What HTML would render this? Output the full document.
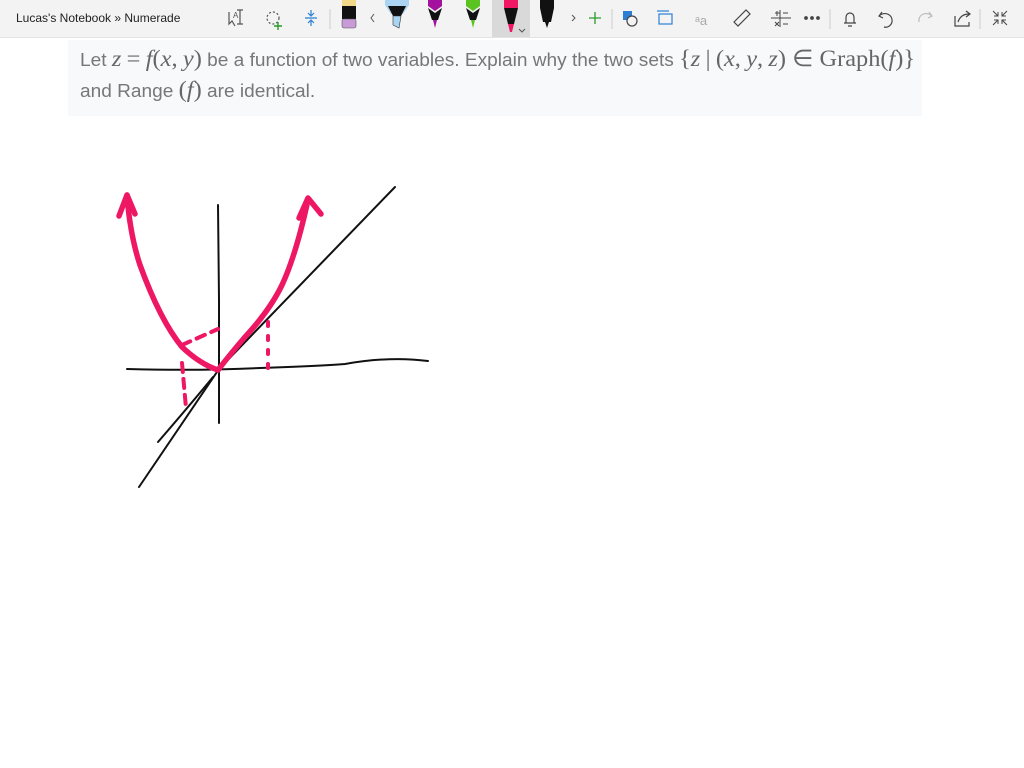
<!DOCTYPE html>
<html><head><meta charset="utf-8"><style>
html,body{margin:0;padding:0;width:1024px;height:768px;background:#fff;overflow:hidden;font-family:"Liberation Sans",sans-serif}
.tb{position:absolute;left:0;top:0;width:1024px;height:37px;background:#f3f3f3;border-bottom:1px solid #e3e3e3}
.title{position:absolute;left:16px;top:11px;font-size:12px;color:#222}
.box{position:absolute;left:68px;top:40px;width:854px;height:76px;background:#f8f9fa}
.q{position:absolute;left:80px;top:44px;font-size:18px;line-height:29px;color:#777;white-space:nowrap;transform-origin:0 0;transform:scaleX(1.06)}
.m{font-family:"Liberation Serif",serif;font-style:italic;font-size:23px;color:#666}
.r{font-family:"Liberation Serif",serif;font-size:23px;color:#666}
</style></head><body>
<div class="tb"></div>
<div class="title">Lucas's Notebook » Numerade</div>
<svg style="position:absolute;left:0;top:0" width="1024" height="38">
<rect x="492" y="0" width="38" height="37" fill="#d9d9d9"/>
<g stroke="#555" fill="none" stroke-width="1.2">
<path d="M229 12 L229 24 L232 21 L235 26"/><text x="233" y="18" font-size="8" fill="#555" stroke="none">A</text><path d="M240 10v14M237 10h6M237 24h6"/>
<circle cx="273" cy="18" r="6" stroke-dasharray="2 2"/>
<path d="M305 18h12M311 10v5M308 13l3 3 3-3M311 26v-5M308 23l3-3 3 3" stroke="#2a7fd4"/>
</g>
<path d="M278 22v8M274 26h8" stroke="#2a9a2a" stroke-width="1.4"/>
<line x1="330" y1="9" x2="330" y2="29" stroke="#ccc"/>
<rect x="342" y="0" width="14" height="6" fill="#f4d88a"/><rect x="342" y="6" width="14" height="13" fill="#111"/><rect x="342" y="19" width="14" height="9" rx="2" fill="#c89ad6" stroke="#555" stroke-width=".6"/>
<path d="M374 14l-3 4 3 4" stroke="#555" fill="none"/>
<path d="M385 0h24v5l-6 9h-12l-6-9z" fill="#a9d4f2"/><path d="M388 6h18l-5 10h-8z" fill="#111"/><path d="M393 16h8l-2 12-6-3z" fill="#a9d4f2" stroke="#333" stroke-width=".6"/>
<path d="M428 0h14v6l-7 5-7-5z" fill="#a3119e"/><path d="M428 8l7 5 7-5l-4 12h-6z" fill="#111"/><path d="M433 20h4l-2 8z" fill="#a3119e"/>
<path d="M466 0h14v6l-7 5-7-5z" fill="#5bc31f"/><path d="M466 8l7 5 7-5l-4 12h-6z" fill="#111"/><path d="M471 20h4l-2 8z" fill="#5bc31f"/>
<path d="M504 0h14v8h-14z" fill="#f01764"/><path d="M504 8h14l-4 16h-6z" fill="#111"/><path d="M508 24h6l-2 8h-2z" fill="#f01764"/>
<path d="M519 29l3 3 3-3" stroke="#555" fill="none"/>
<path d="M540 0h14v8l-3 14h-8l-3-14z" fill="#111"/><path d="M545 22h4l-2 6z" fill="#111"/>
<path d="M572 15l3 3-3 3" stroke="#555" fill="none"/>
<path d="M595 12v12M589 18h12" stroke="#2a9a2a" stroke-width="1.3"/>
<line x1="612" y1="9" x2="612" y2="29" stroke="#ccc"/>
<g fill="none" stroke="#444" stroke-width="1.2">
<rect x="623" y="11" width="9" height="9" fill="#2a7fd4" stroke="none"/><circle cx="632" cy="21" r="5" fill="#f3f3f3"/>
<rect x="659" y="14" width="13" height="10" stroke="#2a7fd4"/><path d="M657 11h12" stroke="#2a7fd4"/>
<text x="695" y="25" font-size="13" fill="#aaa" stroke="none">ᵃa</text>
<path d="M734 22l12-12 4 4-12 12z"/>
<path d="M775 13h5M777 11v5M783 13h5M775 22l4 4M779 22l-4 4M783 24h5M771 18h20M780 10v17" stroke-width="1"/>
<circle cx="806" cy="18" r="1.3" fill="#444"/><circle cx="812" cy="18" r="1.3" fill="#444"/><circle cx="818" cy="18" r="1.3" fill="#444"/>
</g>
<line x1="830" y1="9" x2="830" y2="29" stroke="#ccc"/>
<g fill="none" stroke="#444" stroke-width="1.2">
<path d="M844 23h12M846 23v-6a4 4 0 0 1 8 0v6M848 26h4"/>
<path d="M882 12l-3 4 4 2M879 16c5-5 14-2 13 6-1 4-5 6-8 5"/>
<path d="M929 12l3 4-4 2M932 16c-5-5-14-2-13 6" stroke="#bbb"/>
<path d="M955 16v10h14v-4M958 22c2-6 6-8 11-8M966 11l4 3-4 3"/>
</g>
<line x1="980" y1="9" x2="980" y2="29" stroke="#ccc"/>
<path d="M993 11l5 5M998 12v4h-4M1007 11l-5 5M1002 12v4h4M993 25l5-5M998 24v-4h-4M1007 25l-5-5M1002 24v-4h4" stroke="#444" fill="none"/>
</svg>
<div class="box"></div>
<div class="q">Let <span class="m">z</span> <span class="r">=</span> <span class="m">f</span><span class="r">(</span><span class="m">x</span><span class="r">,</span> <span class="m">y</span><span class="r">)</span> be a function of two variables. Explain why the two sets <span class="r">{</span><span class="m">z</span> <span class="r">|</span> <span class="r">(</span><span class="m">x</span><span class="r">,</span> <span class="m">y</span><span class="r">,</span> <span class="m">z</span><span class="r">) ∈ Graph(</span><span class="m">f</span><span class="r">)}</span><br>and Range <span class="r">(</span><span class="m">f</span><span class="r">)</span> are identical.</div>
<svg style="position:absolute;left:0;top:0" width="1024" height="768">
<g fill="none" stroke="#111" stroke-width="2" stroke-linecap="round">
<path d="M218 205 L219 300 L219 423"/>
<path d="M127 369 Q200 371 260 368 Q320 366 345 364 Q390 356 428 361"/>
<path d="M395 187 L219 369 L139 487"/>
<path d="M158 442 Q190 405 213 377"/>
</g>
<g fill="none" stroke="#ee1763" stroke-width="5.5" stroke-linecap="round" stroke-linejoin="round">
<path d="M127 195 Q130 235 140 265 Q160 320 182 347 Q200 364 218 370"/>
<path d="M119 216 L127 195 L135 214"/>
<path d="M218 370 Q232 352 245 337 Q270 310 282 285 Q296 255 308 200"/>
<path d="M299 218 L308 198 L321 214"/>
<path d="M182 345 L218 329" stroke-dasharray="9 7" stroke-width="4"/>
<path d="M182 363 L186 408" stroke-dasharray="9 7" stroke-width="4"/>
<path d="M268 322 L268 373" stroke-dasharray="4 10" stroke-width="4"/>
</g>
</svg>
</body></html>
